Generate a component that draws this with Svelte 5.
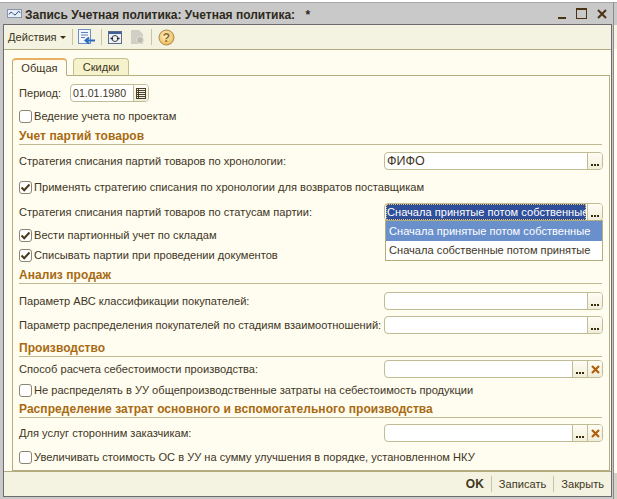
<script>
	let query = $state('Сначала принятые потом собственные');
	const options = ['Сначала принятые потом собственные', 'Сначала собственные потом принятые'];
</script>

{#snippet check(label, checked, top)}
	<label class="row check {top}">
		<span class="box">
			{#if checked}
				<svg width="11" height="9" viewBox="0 0 11 9"><path d="M1.5 4.5 L4.2 7.2 L9.5 1.5" fill="none" stroke="#4a3a1c" stroke-width="2" /></svg>
			{/if}
		</span>
		<span>{label}</span>
	</label>
{/snippet}

{#snippet pick()}
	<span class="btn"><i></i><i></i><i></i></span>
{/snippet}

{#snippet clear()}
	<span class="btn clear">
		<svg width="9" height="9" viewBox="0 0 9 9"><path d="M1 1 L8 8 M8 1 L1 8" stroke="#b0600c" stroke-width="2.2" /></svg>
	</span>
{/snippet}

<div class="page">
	<div class="frame">
		<header class="title">
			<svg class="logo" width="15" height="9" viewBox="0 0 15 9">
				<rect x="0.5" y="0.5" width="14" height="8" fill="#e8eef8" stroke="#8a94a8" />
				<path d="M2 5.5 Q4 1.5 6 4.5 T10 4 T13 4" fill="none" stroke="#33508c" />
			</svg>
			<span class="caption">Запись Учетная политика: Учетная политика: <span class="star">*</span></span>
			<div class="winbtns">
				<span class="min"></span>
				<span class="max"></span>
				<svg width="10" height="10" viewBox="0 0 10 10"><path d="M1 1 L9 9 M9 1 L1 9" stroke="#4a3312" stroke-width="2" /></svg>
			</div>
		</header>

		<div class="inner">
			<nav class="toolbar">
				<span class="menu">Действия <b class="caret"></b></span>
				<span class="sep"></span>
				<svg class="first" width="17" height="16" viewBox="0 0 17 16">
					<rect x="0.5" y="0.5" width="12" height="14" fill="#f4f8fc" stroke="#6f8fc0" />
					<path d="M3 3.5h7M3 6h7M3 8.5h4" stroke="#5f7fb8" />
					<path d="M17 11.5H8M11 8.5l-3.5 3 3.5 3" fill="none" stroke="#2c6cc0" stroke-width="2" />
				</svg>
				<span class="sep"></span>
				<svg width="14" height="13" viewBox="0 0 14 13">
					<rect x="0.5" y="0.5" width="13" height="12" fill="#eef2f8" stroke="#5c6c88" />
					<rect x="1" y="1" width="12" height="2" fill="#3f5f98" />
					<circle cx="7" cy="7.5" r="3" fill="none" stroke="#444" />
					<path d="M2.5 7.5h2.5M9 7.5h2.5" stroke="#222" stroke-width="1.4" />
				</svg>
				<svg class="dim" width="15" height="16" viewBox="0 0 15 16">
					<path d="M1 1h8l4 4v10H1z" fill="#cfcfc6" />
					<circle cx="10" cy="11" r="3.5" fill="#bcbcb2" stroke="#e4e4da" />
				</svg>
				<span class="sep"></span>
				<svg width="17" height="17" viewBox="0 0 17 17">
					<defs>
						<radialGradient id="help" cx="0.45" cy="0.4" r="0.6">
							<stop offset="0" stop-color="#fff6d8" />
							<stop offset="1" stop-color="#f0b850" />
						</radialGradient>
					</defs>
					<circle cx="8.5" cy="8.5" r="7.5" fill="url(#help)" stroke="#a88a50" />
					<text x="8.5" y="12.5" text-anchor="middle" class="qmark">?</text>
				</svg>
			</nav>

			<main class="content">
				<div class="tabs">
					<span class="tab active">Общая</span>
					<span class="tab">Скидки</span>
				</div>
				<section class="panel">
					<div class="row">
						<span class="period-label">Период:</span>
						<span class="field date">
							<span class="value small">01.01.1980</span>
							<span class="btn cal">
								<svg width="10" height="11" viewBox="0 0 10 11"><path d="M0 .5h10M0 2.5h10M0 4.5h10M0 6.5h10M0 8.5h10M0 10.5h10M2.5 0v11M.5 0v11M9.5 0v11" stroke="#4a3f28" stroke-width="1" /></svg>
							</span>
						</span>
					</div>
					{@render check('Ведение учета по проектам', false, 'm5')}

					<h2 class="m3">Учет партий товаров</h2>
					<div class="row m7">
						<span class="label">Стратегия списания партий товаров по хронологии:</span>
						<span class="field"><span class="value big">ФИФО</span>{@render pick()}</span>
					</div>
					{@render check('Применять стратегию списания по хронологии для возвратов поставщикам', true, 'm8')}
					<div class="row m7">
						<span class="label">Стратегия списания партий товаров по статусам партии:</span>
						<span class="field">
							<span class="value"><span class="selected">{query}</span></span>
							{@render pick()}
							<div class="dropdown">
								{#each options as option (option)}
									<button type="button" class="option" class:current={option === query} onclick={() => (query = option)}>{option}</button>
								{/each}
							</div>
						</span>
					</div>
					{@render check('Вести партионный учет по складам', true, 'm5')}
					{@render check('Списывать партии при проведении документов', true, 'm2')}

					<h2 class="m3">Анализ продаж</h2>
					<div class="row m8">
						<span class="label">Параметр АВС классификации покупателей:</span>
						<span class="field"><span class="value"></span>{@render pick()}</span>
					</div>
					<div class="row m6">
						<span class="label">Параметр распределения покупателей по стадиям взаимоотношений:</span>
						<span class="field"><span class="value"></span>{@render pick()}</span>
					</div>

					<h2 class="m6">Производство</h2>
					<div class="row m3">
						<span class="label">Способ расчета себестоимости производства:</span>
						<span class="field"><span class="value"></span>{@render pick()}{@render clear()}</span>
					</div>
					{@render check('Не распределять в УУ общепроизводственные затраты на себестоимость продукции', false, 'm3')}

					<h2 class="m2">Распределение затрат основного и вспомогательного производства</h2>
					<div class="row m6">
						<span class="label">Для услуг сторонним заказчикам:</span>
						<span class="field"><span class="value"></span>{@render pick()}{@render clear()}</span>
					</div>
					{@render check('Увеличивать стоимость ОС в УУ на сумму улучшения в порядке, установленном НКУ', false, 'm6')}
				</section>
			</main>

			<footer class="actions">
				<strong>OK</strong>
				<span class="sep"></span>
				<span>Записать</span>
				<span class="sep"></span>
				<span>Закрыть</span>
			</footer>
		</div>
	</div>
	<aside class="behind"></aside>
</div>

<style>
	:global(body) {
		margin: 0;
		background: #fff;
		overflow: hidden;
	}

	.page {
		display: flex;
		height: 499px;
		box-sizing: border-box;
		padding-top: 2px;
		background: linear-gradient(#fff 2px, #a8a8a8 2px, #a8a8a8 3px, #c9c9c9 3px);
	}

	.frame {
		box-sizing: border-box;
		width: 614px;
		height: 497px;
		border-top: 1px solid #a8a8a8;
		border-right: 1px solid #8e8a86;
		background: #c9c9c9;
		padding: 0 1px 0 3px;
		display: flex;
		flex-direction: column;
		font-family: "Liberation Sans", Arial, sans-serif;
		font-size: 11.1px;
		color: #40361e;
	}

	.behind {
		flex: 1;
		margin-top: 1px;
		background: linear-gradient(#c9c9c9 22px, #f4f2e0 22px, #f4f2e0 46px, #fffcf0 46px, #fffcf0 470px, #d4d2c4 470px);
	}

	.title {
		height: 21px;
		flex: none;
		display: flex;
		align-items: center;
		color: #2e2a20;
	}

	.logo {
		margin-left: 4px;
	}

	.caption {
		margin-left: 3px;
		padding-top: 2px;
		font-weight: bold;
		font-size: 12px;
	}

	.star {
		margin-left: 7px;
	}

	.winbtns {
		margin-left: auto;
		margin-right: 5px;
		display: flex;
		align-items: center;
		gap: 10px;
	}

	.min {
		width: 8px;
		height: 2px;
		margin-top: 9px;
		background: #4a3312;
	}

	.max {
		box-sizing: border-box;
		width: 11px;
		height: 11px;
		border: 1px solid #4a3312;
		border-top-width: 2px;
	}

	.inner {
		flex: 1;
		min-height: 0;
		margin-bottom: 2px;
		display: flex;
		flex-direction: column;
		border: 1px solid #6f6a70;
		background: #fffcf0;
	}

	.toolbar {
		box-sizing: border-box;
		height: 25px;
		flex: none;
		display: flex;
		align-items: center;
		gap: 6px;
		padding-left: 4px;
		background: #f4f2e0;
		border-bottom: 1px solid #b0ab80;
	}

	.menu {
		display: flex;
		align-items: center;
		gap: 3px;
	}

	.caret {
		width: 0;
		height: 0;
		border: 3px solid transparent;
		border-top-color: #3a2c10;
		border-bottom: 0;
	}

	.sep {
		width: 1px;
		height: 16px;
		background: #c8c4a4;
	}

	.first {
		margin-left: -1px;
	}

	.dim {
		margin-left: 2px;
	}

	.qmark {
		font: bold 12px "Liberation Sans", sans-serif;
		fill: #8a6a2c;
	}

	.content {
		flex: 1;
		min-height: 0;
		display: flex;
		flex-direction: column;
		padding: 8px 1px 0 8px;
	}

	.tabs {
		display: flex;
		gap: 6px;
		height: 18px;
		flex: none;
		position: relative;
		z-index: 1;
		margin-bottom: -1px;
	}

	.tab {
		box-sizing: border-box;
		width: 56px;
		display: flex;
		align-items: center;
		justify-content: center;
		background: #f6f2cc;
		border: 1px solid #c4c090;
		border-bottom: 1px solid #b5ad80;
		border-radius: 4px 4px 0 0;
	}

	.tab.active {
		background: #fffcf0;
		border-color: #b5ad80;
		border-top: 2px solid #e8b060;
		border-bottom-color: #fffcf0;
		width: 55px;
	}

	.panel {
		flex: 1;
		min-height: 0;
		box-sizing: border-box;
		border: 1px solid #b5ad80;
		padding: 8px 0 0 6px;
	}

	.row {
		height: 18px;
		display: flex;
		align-items: center;
	}

	.label {
		width: 365px;
		flex: none;
		white-space: nowrap;
	}

	.period-label {
		width: 51px;
		flex: none;
	}

	.field {
		position: relative;
		box-sizing: border-box;
		width: 219px;
		height: 18px;
		display: flex;
		background: #fff;
		border: 1px solid #c0bc94;
		border-radius: 4px;
	}

	.field.date {
		width: 79px;
	}

	.value {
		flex: 1;
		min-width: 0;
		padding: 0 2px;
		line-height: 16px;
		white-space: nowrap;
	}

	.value.big {
		font-size: 12.5px;
	}

	.value.small {
		font-size: 10.6px;
	}

	.selected {
		display: block;
		margin: 0 -1px;
		padding: 0 1px;
		background: #2f4f9a;
		color: #fff;
		outline: 1px dotted #e0c070;
		outline-offset: -1px;
	}

	.btn {
		box-sizing: border-box;
		width: 15px;
		flex: none;
		display: flex;
		align-items: flex-end;
		justify-content: center;
		gap: 1px;
		padding-bottom: 3px;
		background: linear-gradient(#fffdf4, #f0eeda);
		border-left: 1px solid #c0bc94;
		border-radius: 0 3px 3px 0;
	}

	.btn i {
		width: 2px;
		height: 2px;
		background: #3a2c10;
	}

	.btn.clear,
	.btn.cal {
		align-items: center;
		padding: 0;
	}

	.btn:has(+ .btn) {
		border-radius: 0;
	}

	.dropdown {
		position: absolute;
		z-index: 2;
		top: 16px;
		left: 0;
		right: -1px;
		box-sizing: border-box;
		height: 41px;
		display: flex;
		flex-direction: column;
		background: #fff;
		border: 1px solid #b5ad80;
	}

	.option {
		flex: 1;
		border: 0;
		padding: 0 3px;
		background: #fff;
		text-align: left;
		font: inherit;
		color: #40361e;
		white-space: nowrap;
	}

	.option.current {
		background: #6a90cc;
		color: #fff;
	}

	.check {
		gap: 2px;
	}

	.box {
		box-sizing: border-box;
		width: 13px;
		height: 13px;
		flex: none;
		display: flex;
		align-items: center;
		justify-content: center;
		background: #fff;
		border: 1px solid #8c8670;
		border-radius: 3px;
	}

	h2 {
		box-sizing: border-box;
		height: 17px;
		margin-bottom: 0;
		margin-right: 7px;
		border-bottom: 1px solid #c0b890;
		font-size: 12px;
		line-height: 17px;
		font-weight: bold;
		letter-spacing: 0.05px;
		color: #a86a10;
		white-space: nowrap;
	}

	.m2 { margin-top: 2px; }
	.m3 { margin-top: 3px; }
	.m5 { margin-top: 5px; }
	.m6 { margin-top: 6px; }
	.m7 { margin-top: 7px; }
	.m8 { margin-top: 8px; }

	.actions {
		height: 24px;
		flex: none;
		display: flex;
		align-items: center;
		justify-content: flex-end;
		gap: 7px;
		padding-right: 7px;
		background: #f4f2e0;
		border-top: 1px solid #b0ab80;
	}

	.actions strong {
		font-size: 12px;
	}
</style>
